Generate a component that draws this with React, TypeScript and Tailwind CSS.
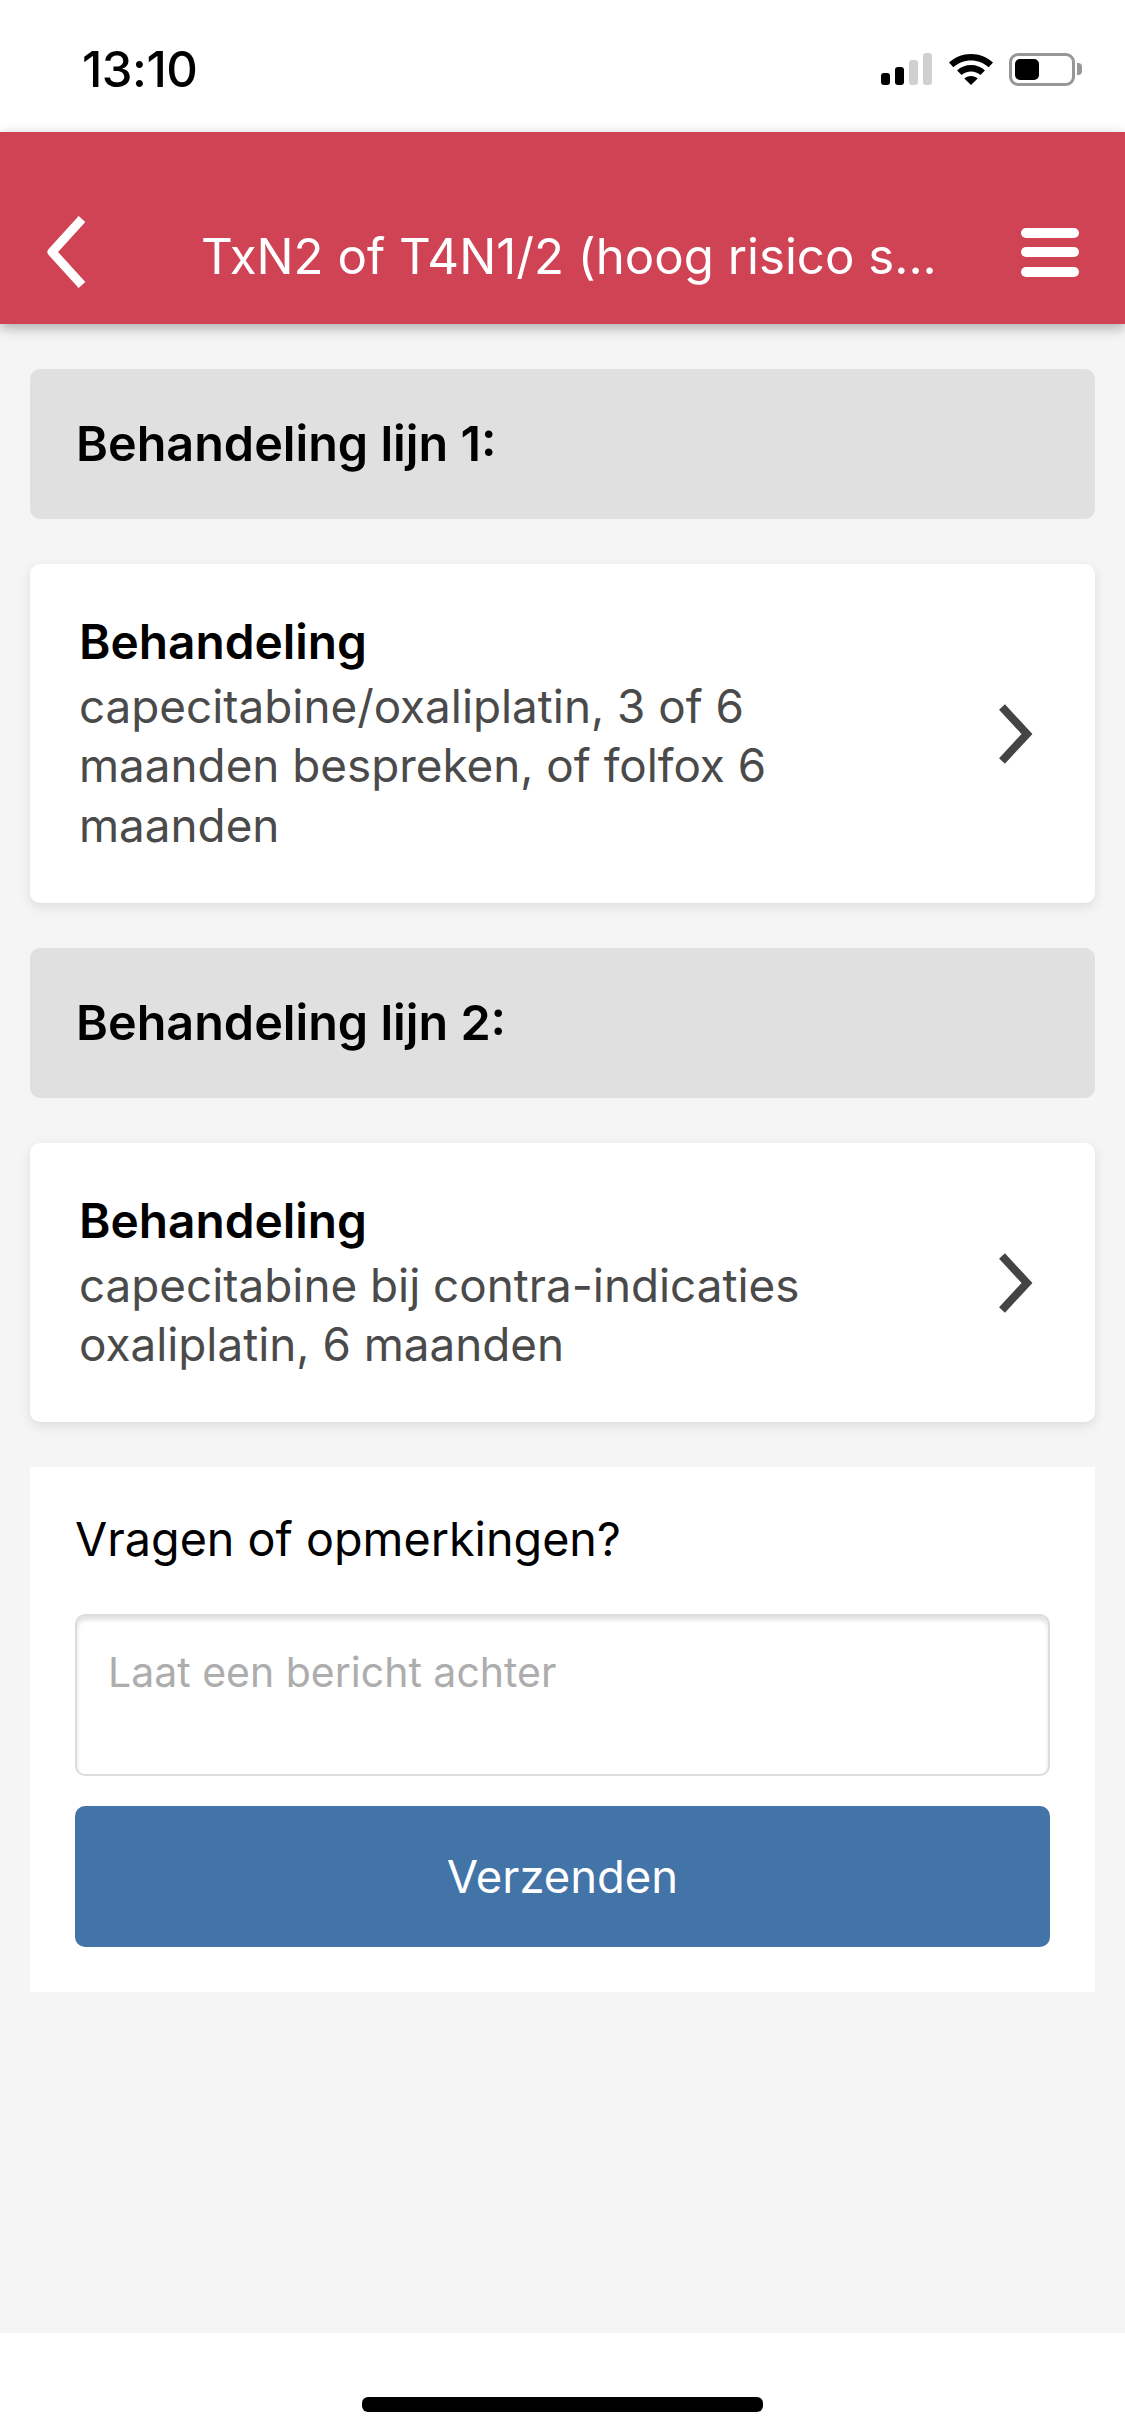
function StatusBar() {
  return (
    <div className="h-[132px] bg-white flex items-start justify-between pt-[48px] pl-[82px] pr-[43px]">
      <span className="text-[49px] leading-[44px] font-medium text-black tracking-[-0.5px]">13:10</span>
      <div className="flex items-center gap-[15px] pt-[4px]">
        <svg width="52" height="32" viewBox="0 0 52 32">
          <rect x="0" y="20" width="9" height="12" rx="3" fill="#000" />
          <rect x="14" y="14" width="9" height="18" rx="3" fill="#000" />
          <rect x="28" y="7" width="9" height="25" rx="3" fill="#d0d0d0" />
          <rect x="42" y="0" width="9" height="32" rx="3" fill="#d0d0d0" />
        </svg>
        <svg width="46" height="34" viewBox="0 0 46 34">
          <path d="M23 2C14.5 2 6.8 5.3 1 10.6l4.4 4.6C10 11 16.2 8.4 23 8.4s13 2.6 17.6 6.8l4.4-4.6C39.2 5.3 31.5 2 23 2z" fill="#000" />
          <path d="M23 13c-5.3 0-10.2 2-13.9 5.4l4.5 4.7c2.5-2.2 5.8-3.6 9.4-3.6s6.9 1.4 9.4 3.6l4.5-4.7C33.2 15 28.3 13 23 13z" fill="#000" />
          <path d="M23 24c-2.6 0-5 1-6.7 2.6L23 33l6.7-6.4C28 25 25.6 24 23 24z" fill="#000" />
        </svg>
        <div className="flex items-center gap-[2px]">
          <div className="w-[66px] h-[33px] rounded-[9px] border-[3px] border-[#979797] p-[3px] flex">
            <div className="w-[24px] h-full rounded-[5px] bg-black" />
          </div>
          <div className="w-[5px] h-[12px] rounded-r-[4px] bg-[#979797]" />
        </div>
      </div>
    </div>
  )
}

function Header() {
  return (
    <header className="relative h-[192px] bg-[#cf4355] shadow-[0_4px_12px_rgba(0,0,0,0.3)] flex items-center pt-[48px]">
      <div className="w-[201px] shrink-0 pl-[44px]">
        <svg width="42" height="72" viewBox="0 0 42 72" fill="none" className="block">
          <path d="M38 3 L8 36 L38 69" stroke="#fff" strokeWidth="9" strokeLinejoin="round" />
        </svg>
      </div>
      <div className="flex-1 min-w-0 pt-[8px] text-[49.2px] leading-[60px] text-white whitespace-nowrap">TxN2 of T4N1/2 (hoog risico s...</div>
      <div className="shrink-0 pr-[46px] pl-[40px] flex flex-col gap-[9.5px]">
        <div className="w-[58px] h-[10px] rounded-full bg-white" />
        <div className="w-[58px] h-[10px] rounded-full bg-white" />
        <div className="w-[58px] h-[10px] rounded-full bg-white" />
      </div>
    </header>
  )
}

function SectionTitle({ children }: { children: string }) {
  return (
    <div className="h-[150px] rounded-[10px] bg-[#e0e0e0] flex items-center pl-[46px]">
      <span className="text-[48.5px] font-semibold leading-[60px] text-black">{children}</span>
    </div>
  )
}

function TreatmentCard({ lines, height }: { lines: string[]; height: string }) {
  return (
    <div className={`${height} rounded-[10px] bg-white shadow-[0_4px_12px_rgba(0,0,0,0.1)] flex items-center pl-[49px] pr-[62px]`}>
      <div className="flex-1 min-w-0">
        <div className="text-[47.8px] leading-[60px] mb-[5px] font-semibold text-black">Behandeling</div>
        {lines.map((line) => (
          <div key={line} className="text-[45.8px] leading-[59.5px] text-[#4a4a4a]">{line}</div>
        ))}
      </div>
      <svg width="35" height="60" viewBox="0 0 35 60" fill="none" className="shrink-0">
        <path d="M4 3 L29 30 L4 57" stroke="#444444" strokeWidth="8" />
      </svg>
    </div>
  )
}

export default function App() {
  return (
    <div className="w-[1125px] h-[2436px] flex flex-col bg-white font-['Inter',sans-serif]">
      <StatusBar />
      <Header />
      <main className="flex-1 bg-[#f5f5f5] px-[30px] pt-[45px] flex flex-col gap-[45px]">
        <SectionTitle>Behandeling lijn 1:</SectionTitle>
        <TreatmentCard
          height="h-[339px]"
          lines={['capecitabine/oxaliplatin, 3 of 6', 'maanden bespreken, of folfox 6', 'maanden']}
        />
        <SectionTitle>Behandeling lijn 2:</SectionTitle>
        <TreatmentCard
          height="h-[279px]"
          lines={['capecitabine bij contra-indicaties', 'oxaliplatin, 6 maanden']}
        />
        <section className="bg-white h-[525px] px-[45px] pt-[42px]">
          <div className="text-[46.7px] leading-[60px] text-black">Vragen of opmerkingen?</div>
          <div className="mt-[45px] h-[162px] rounded-[10px] border-2 border-[#dcdcdc] shadow-[inset_0_4px_4px_rgba(0,0,0,0.12)] px-[31px] pt-[31px] text-[41px] leading-[50px] text-[#adadad]">
            Laat een bericht achter
          </div>
          <button className="mt-[30px] w-full h-[141px] rounded-[10px] bg-[#4374a8] text-white text-[45.4px] leading-[60px]">
            Verzenden
          </button>
        </section>
      </main>
      <footer className="h-[103px] shrink-0 bg-white flex justify-center pt-[64px]">
        <div className="w-[401px] h-[15px] rounded-[6px] bg-black" />
      </footer>
    </div>
  )
}
